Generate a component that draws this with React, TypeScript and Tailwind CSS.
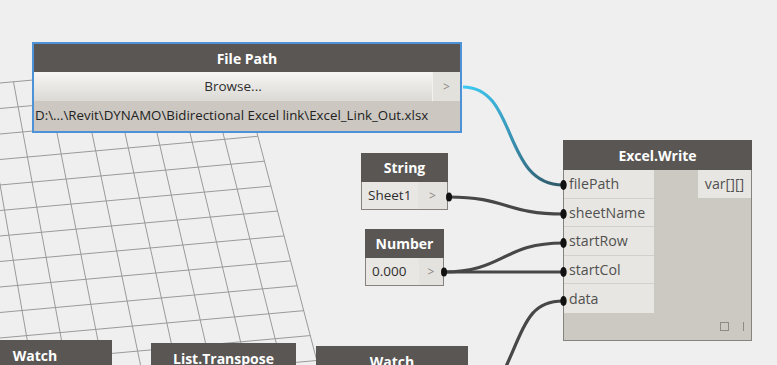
import React from "react";

// perspective grid drawn behind the nodes
const gridHoriz = Array.from({ length: 13 }, (_, i) => 83 + 25.5 * i);
const gridVert = [-9, 23, 57, 92, 125, 157, 190, 223, 257];

const Grid = () => (
  <svg className="absolute inset-0" width={777} height={365}>
    {gridHoriz.map((y0) => {
      const x2 = (257 + 0.263 * (y0 - 133)) / 1.02367;
      return <line key={"h" + y0} x1={-20} y1={y0 + 1.8} x2={x2} y2={y0 - 0.09 * x2} stroke="#9a9a9a" strokeWidth={1} />;
    })}
    {gridVert.map((x0, i) => {
      const s = i === gridVert.length - 1 ? 0.263 : 0.175 + ((x0 + 9) / 266) * 0.09;
      const yTop = (83 - 0.09 * x0 + 11.97 * s) / (1 + 0.09 * s);
      const xTop = x0 + s * (yTop - 133);
      const xBot = x0 + s * (390 - 133);
      return <line key={"v" + x0} x1={xTop} y1={yTop} x2={xBot} y2={390} stroke="#9a9a9a" strokeWidth={1} />;
    })}
  </svg>
);

const Wires = () => (
  <svg className="absolute inset-0" width={777} height={365}>
    <defs>
      <linearGradient id="fp" gradientUnits="userSpaceOnUse" x1={463} y1={87} x2={563} y2={185}>
        <stop offset="0" stopColor="#3dcaf2" />
        <stop offset="0.45" stopColor="#3a98bb" />
        <stop offset="1" stopColor="#2f5866" />
      </linearGradient>
    </defs>
    <path d="M463,87 C518,87 502,185 563,185" fill="none" stroke="url(#fp)" strokeWidth={3.2} />
    <path d="M449,197 C506,197 506,214 563,214" fill="none" stroke="#474747" strokeWidth={3.2} />
    <path d="M444,272 C503,272 503,243 563,243" fill="none" stroke="#474747" strokeWidth={3.2} />
    <path d="M444,272 C503,272 503,272 563,272" fill="none" stroke="#474747" strokeWidth={3.2} />
    <path d="M495,390 C525,330 525,301 563,301" fill="none" stroke="#474747" strokeWidth={3.2} />
  </svg>
);

const Ports = () => (
  <svg className="pointer-events-none absolute inset-0" width={777} height={365}>
    <ellipse cx={449} cy={197} rx={3} ry={4.5} fill="#111" />
    <ellipse cx={444} cy={272} rx={3} ry={4.5} fill="#111" />
    {[185, 214, 243, 272, 301].map((y) => (
      <ellipse key={"e" + y} cx={563.5} cy={y} rx={3.2} ry={5} fill="#111" />
    ))}
  </svg>
);

const Header = ({ title, className = "" }: { title: string; className?: string }) => (
  <div className={`flex items-center justify-center bg-[#595654] text-[14px] font-bold text-white ${className}`}>
    {title}
  </div>
);

const excelInputs = ["filePath", "sheetName", "startRow", "startCol", "data"];

export default function App() {
  return (
    <div className="relative h-[365px] w-[777px] overflow-hidden bg-[#efefef] font-['Open_Sans',sans-serif]">
      <Grid />
      <Wires />

      {/* File Path */}
      <div className="absolute left-[32px] top-[42px] flex h-[91px] w-[430px] flex-col border-2 border-[#4d91d6]">
        <Header title="File Path" className="h-[28px]" />
        <div className="flex h-[29px]">
          <div className="flex flex-1 items-center justify-center bg-gradient-to-b from-[#f7f6f4] to-[#dbd9d4] text-[13.5px] text-[#2e2e2e]">
            Browse...
          </div>
          <div className="flex w-[28px] items-center justify-center border-l border-[#f3f2f0] bg-[#e3e1dc] text-[12px] text-[#8a8884]">
            &gt;
          </div>
        </div>
        <div className="flex flex-1 items-center bg-[#ccc8c1] pl-[1px] text-[13.3px] text-[#222]">
          D:\...\Revit\DYNAMO\Bidirectional Excel link\Excel_Link_Out.xlsx
        </div>
      </div>

      {/* String */}
      <div className="absolute left-[361px] top-[153px] flex w-[87px] flex-col">
        <Header title="String" className="h-[29px]" />
        <div className="flex h-[28px] border border-t-0 border-[#86837e] bg-[#e4e2de]">
          <div className="flex w-[56px] items-center bg-[#e9e7e3] pl-[6px] text-[13.5px] text-[#2e2e2e]">Sheet1</div>
          <div className="flex flex-1 items-center justify-center text-[12px] text-[#8a8884]">&gt;</div>
        </div>
      </div>

      {/* Number */}
      <div className="absolute left-[365px] top-[229px] flex w-[79px] flex-col">
        <Header title="Number" className="h-[29px]" />
        <div className="flex h-[28px] border border-t-0 border-[#86837e] bg-[#e4e2de]">
          <div className="flex w-[53px] items-center bg-[#e9e7e3] pl-[6px] text-[13.5px] text-[#2e2e2e]">0.000</div>
          <div className="flex flex-1 items-center justify-center text-[12px] text-[#8a8884]">&gt;</div>
        </div>
      </div>

      {/* Excel.Write */}
      <div className="absolute left-[563px] top-[140px] flex h-[201px] w-[189px] flex-col">
        <Header title="Excel.Write" className="h-[30px]" />
        <div className="flex flex-1 flex-col border border-t-0 border-[#86837e] bg-[#ccc8c2]">
          <div className="flex">
            <div className="flex w-[90px] flex-col bg-[#e8e6e2]">
              {excelInputs.map((name, i) => (
                <div
                  key={name}
                  className={`flex h-[28.5px] items-center pl-[5px] text-[14.2px] text-[#505050] ${i < excelInputs.length - 1 ? "border-b border-[#d3d0cb]" : ""}`}
                >
                  {name}
                </div>
              ))}
            </div>
            <div className="flex-1" />
            <div className="flex h-[28px] w-[53px] items-center justify-center bg-[#e8e6e2] text-[14.2px] text-[#505050]">
              var[][]
            </div>
          </div>
          <div className="flex flex-1 items-center justify-end gap-[14px] pr-[7px]">
            <div className="h-[9px] w-[9px] border border-[#8e8b86]" />
            <div className="h-[9px] w-[1px] bg-[#8e8b86]" />
          </div>
        </div>
      </div>

      {/* bottom nodes, cut off by the window */}
      <div className="absolute left-[-42px] top-[340px] w-[154px]">
        <Header title="Watch" className="h-[30px]" />
      </div>
      <div className="absolute left-[151px] top-[343px] w-[145px]">
        <Header title="List.Transpose" className="h-[30px]" />
      </div>
      <div className="absolute left-[316px] top-[346px] w-[152px]">
        <Header title="Watch" className="h-[30px]" />
      </div>

      <Ports />
    </div>
  );
}
